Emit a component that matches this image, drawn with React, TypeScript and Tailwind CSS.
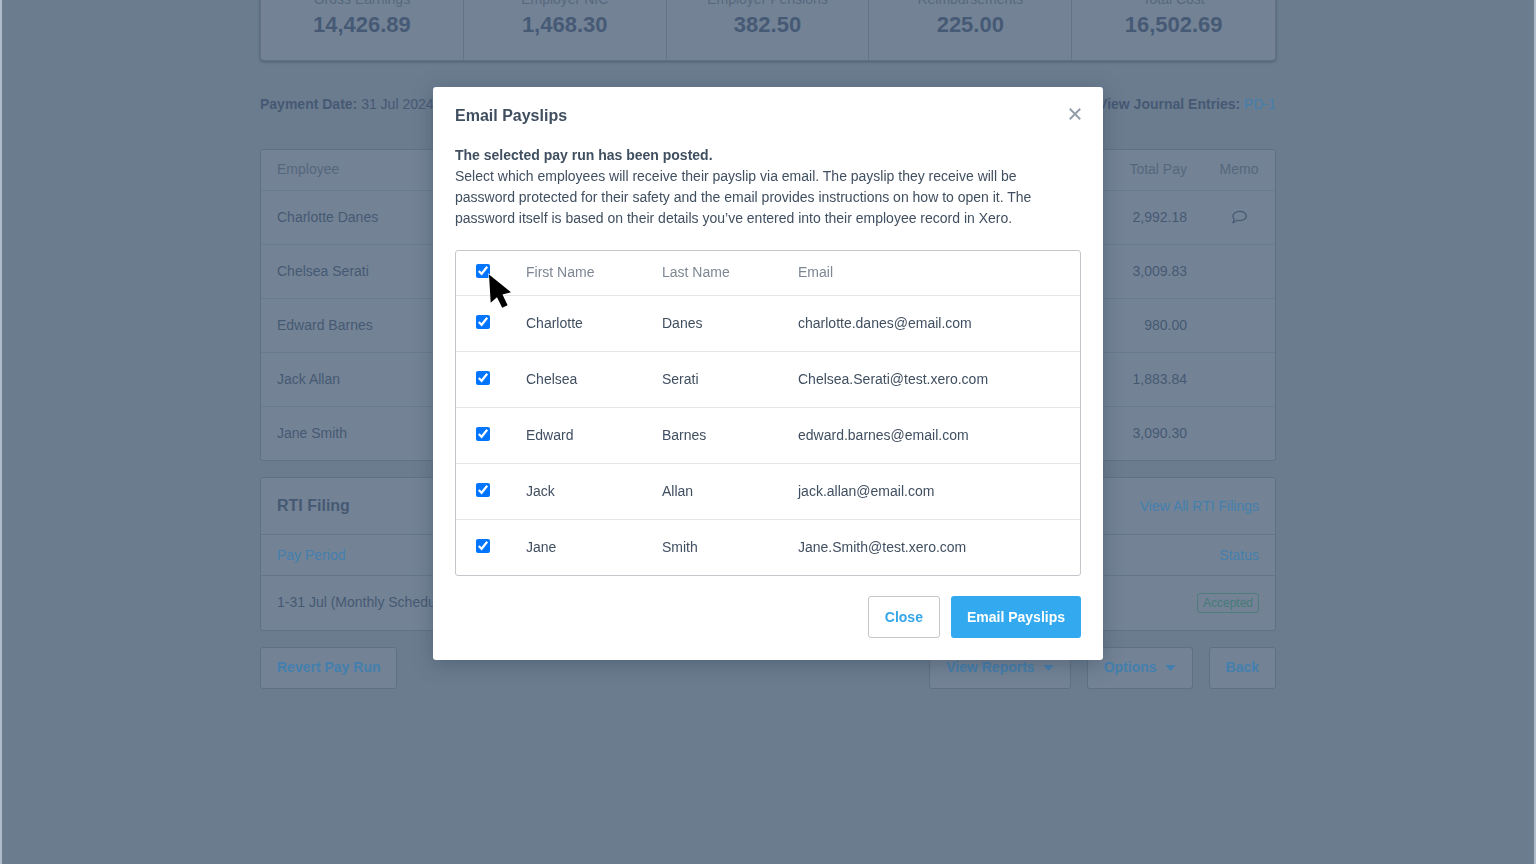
import { useState } from 'react';
import type { ReactNode } from 'react';
import { clsx } from 'clsx';

const totals = [
  { label: 'Gross Earnings', value: '14,426.89' },
  { label: 'Employer NIC', value: '1,468.30' },
  { label: 'Employer Pensions', value: '382.50' },
  { label: 'Reimbursements', value: '225.00' },
  { label: 'Total Cost', value: '16,502.69' },
];

const employees = [
  { first: 'Charlotte', last: 'Danes', email: 'charlotte.danes@email.com', pay: '2,992.18', memo: true },
  { first: 'Chelsea', last: 'Serati', email: 'Chelsea.Serati@test.xero.com', pay: '3,009.83' },
  { first: 'Edward', last: 'Barnes', email: 'edward.barnes@email.com', pay: '980.00' },
  { first: 'Jack', last: 'Allan', email: 'jack.allan@email.com', pay: '1,883.84' },
  { first: 'Jane', last: 'Smith', email: 'Jane.Smith@test.xero.com', pay: '3,090.30' },
];

const MemoIcon = () => (
  <svg className="inline-block" width="17" height="15" viewBox="0 0 16 14" fill="none" stroke="currentColor" strokeWidth="1.2" strokeLinejoin="round" aria-hidden="true">
    <path d="M8.2 1.2c3.6 0 6.3 1.9 6.3 4.4S11.8 10 8.2 10c-.9 0-1.7-.1-2.5-.4-.8 1.2-2.2 2-4 2.1.8-.8 1.3-1.700 1.400-2.900C2.200 8 1.800 6.900 1.800 5.700c0-2.500 2.800-4.500 6.400-4.500z" />
  </svg>
);

const Caret = () => (
  <svg width="11" height="6" viewBox="0 0 11 6" fill="currentColor" aria-hidden="true">
    <path d="M0.300 0h10.400L5.500 6z" />
  </svg>
);

const Pointer = () => (
  <svg className="pointer-events-none absolute top-[22px] left-[31px] z-10" width="26" height="37" viewBox="0 0 26 37" aria-hidden="true">
    <path
      d="M2 1.500L3.700 29.800 10 24.200 15.200 34.800 20.600 32.300 15.500 21.600 24 19.200z"
      fill="#000"
      stroke="#fff"
      strokeWidth="1.200"
      paintOrder="stroke"
    />
  </svg>
);

const PageButton = ({ children }: { children: ReactNode }) => (
  <button
    type="button"
    className="flex h-[42px] items-center gap-2 rounded-[3px] border border-[#5f7083] bg-[#738395] px-4 font-bold text-[#437fae]"
  >
    {children}
  </button>
);

const PayRun = () => (
  <main className="mx-auto flex w-full max-w-[1016px] flex-col">
    <dl className="-mt-8 grid grid-cols-5 divide-x divide-[#63748a] rounded-[4px] border border-[#607185] bg-[#738395] pt-5 text-center shadow-[0_1px_3px_rgba(50,65,85,0.5)]">
      {totals.map(({ label, value }) => (
        <div key={label} className="pb-[19px]">
          <dt className="leading-5 text-[#57687e]">{label}</dt>
          <dd className="text-[22px] leading-8 font-bold text-[#465a75]">{value}</dd>
        </div>
      ))}
    </dl>

    <div className="mt-[33px] flex justify-between">
      <p>
        <strong>Payment Date:</strong> 31 Jul 2024
      </p>
      <p>
        <strong>View Journal Entries:</strong>{' '}
        <a href="#journal" className="text-[#437fae]">PD-1</a>
      </p>
    </div>

    <div className="mt-[34px] rounded-[3px] border border-[#607185] bg-[#738395]">
      <table className="w-full">
        <thead>
          <tr className="h-10 text-[#55677d]">
            <th className="px-4 text-left font-normal">Employee</th>
            <th className="w-28 px-4 text-right font-normal">Total Pay</th>
            <th className="w-18 px-4 text-center font-normal">Memo</th>
          </tr>
        </thead>
        <tbody>
          {employees.map(({ first, last, pay, memo }) => (
            <tr key={first} className="h-[54px] border-t border-[#687a8d]">
              <td className="px-4">{first} {last}</td>
              <td className="px-4 text-right">{pay}</td>
              <td className="px-4 text-center">{memo && <MemoIcon />}</td>
            </tr>
          ))}
        </tbody>
      </table>
    </div>

    <section className="mt-4 rounded-[3px] border border-[#607185] bg-[#738395]">
      <div className="flex h-14 items-center justify-between px-4">
        <h2 className="text-base font-bold">RTI Filing</h2>
        <a href="#filings" className="text-[#437fae]">View All RTI Filings</a>
      </div>
      <table className="w-full">
        <thead>
          <tr className="h-[41px] border-t border-[#65768a] text-[#437fae]">
            <th className="px-4 text-left font-normal">Pay Period</th>
            <th className="px-4 text-right font-normal">Status</th>
          </tr>
        </thead>
        <tbody>
          <tr className="h-[54px] border-t border-[#65768a]">
            <td className="px-4">1-31 Jul (Monthly Schedule)</td>
            <td className="px-4 text-right">
              <span className="inline-block rounded-[3px] border border-[#4d7c7d] px-[5px] text-xs leading-[18px] text-[#477a78]">
                Accepted
              </span>
            </td>
          </tr>
        </tbody>
      </table>
    </section>

    <div className="mt-4 flex items-center justify-between">
      <PageButton>Revert Pay Run</PageButton>
      <div className="flex gap-4">
        <PageButton>View Reports <Caret /></PageButton>
        <PageButton>Options <Caret /></PageButton>
        <PageButton>Back</PageButton>
      </div>
    </div>
  </main>
);

const EmailPayslips = () => {
  const [selected, setSelected] = useState(employees.map(({ email }) => email));
  const allSelected = selected.length === employees.length;

  const toggle = (email: string) => {
    setSelected(selected.includes(email) ? selected.filter((e) => e !== email) : [...selected, email]);
  };

  return (
    <div
      role="dialog"
      aria-labelledby="dialog-title"
      className="w-full max-w-[670px] rounded-[3px] bg-white p-[22px] pt-[18px] text-[#404f60] shadow-[0_4px_20px_rgba(50,65,85,0.4)]"
    >
      <div className="flex items-start justify-between">
        <h1 id="dialog-title" className="text-base leading-[22px] font-bold">Email Payslips</h1>
        <button type="button" aria-label="Close dialog" className="-mr-1 flex h-[18px] w-5 items-center justify-center text-[#939eaa]">
          <svg width="12" height="12" viewBox="0 0 12 12" stroke="currentColor" strokeWidth="2" aria-hidden="true">
            <path d="M0.800 0.800l10.400 10.400M11.200 0.800L0.800 11.200" />
          </svg>
        </button>
      </div>

      <p className="mt-[18px] pr-6">
        <strong className="block">The selected pay run has been posted.</strong>
        Select which employees will receive their payslip via email. The payslip they receive will be
        password protected for their safety and the email provides instructions on how to open it. The
        password itself is based on their details you’ve entered into their employee record in Xero.
      </p>

      <div className="mt-[21px] rounded-[3px] border border-[#c3c7cc]">
        <table className="w-full table-fixed">
          <thead>
            <tr className="h-11 text-left text-[#7c8793]">
              <th className="relative w-[54px] pl-5 font-normal">
                <input
                  type="checkbox"
                  aria-label="Select all employees"
                  className="mb-[3px] block size-[14px]"
                  checked={allSelected}
                  onChange={() => setSelected(allSelected ? [] : employees.map(({ email }) => email))}
                />
                <Pointer />
              </th>
              <th className="w-[136px] pl-4 font-normal">First Name</th>
              <th className="w-[136px] pl-4 font-normal">Last Name</th>
              <th className="pl-4 font-normal">Email</th>
            </tr>
          </thead>
          <tbody>
            {employees.map(({ first, last, email }) => (
              <tr key={email} className="h-14 border-t border-[#e3e5e8]">
                <td className="pl-5">
                  <input
                    type="checkbox"
                    aria-label={`Select ${first} ${last}`}
                    className="mb-[3px] block size-[14px]"
                    checked={selected.includes(email)}
                    onChange={() => toggle(email)}
                  />
                </td>
                <td className="pl-4">{first}</td>
                <td className="pl-4">{last}</td>
                <td className="pl-4">{email}</td>
              </tr>
            ))}
          </tbody>
        </table>
      </div>

      <div className="mt-5 flex justify-end gap-[11px]">
        {['Close', 'Email Payslips'].map((label) => (
          <button
            key={label}
            type="button"
            className={clsx(
              'h-[42px] rounded-[3px] px-4 font-bold',
              label === 'Close' ? 'border border-[#c3c7cc] bg-white text-[#35a6ea]' : 'bg-[#33a9f0] text-white'
            )}
          >
            {label}
          </button>
        ))}
      </div>
    </div>
  );
};

export default function App() {
  return (
    <div className="flex min-h-screen flex-col overflow-hidden border-x-2 border-[#aebccc] bg-[#6b7c8f] font-['Liberation_Sans',Arial,sans-serif] text-sm leading-[21px] text-[#465973]">
      <PayRun />
      <div className="fixed inset-0 flex items-start justify-center pt-[87px]">
        <EmailPayslips />
      </div>
    </div>
  );
}
